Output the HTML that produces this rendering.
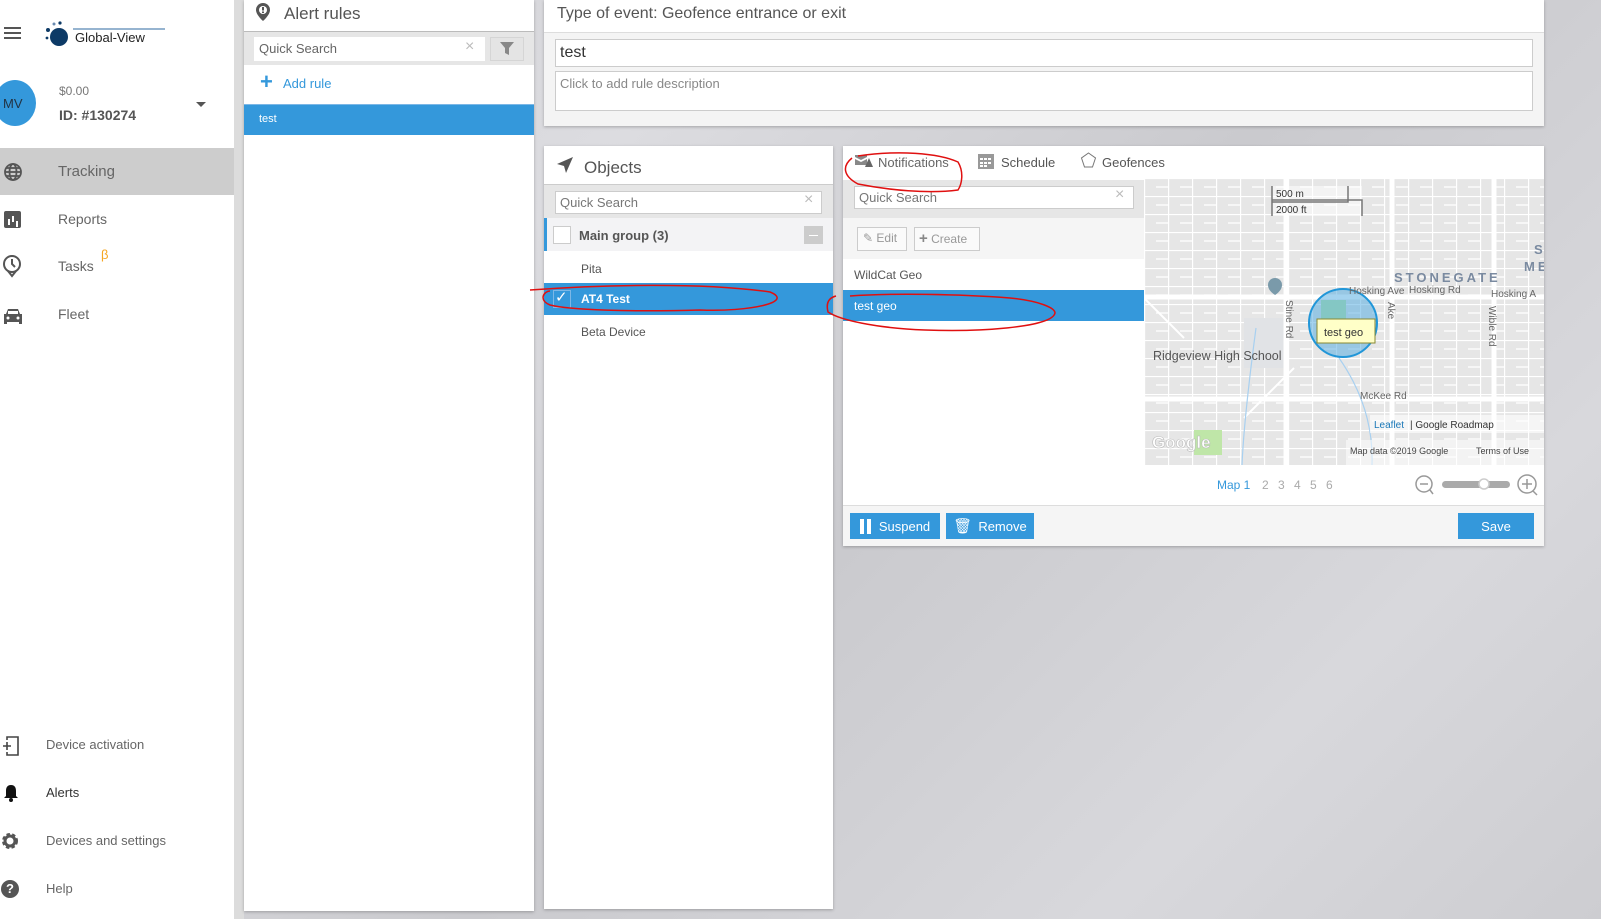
<!DOCTYPE html>
<html><head><meta charset="utf-8"><style>
*{box-sizing:border-box;margin:0;padding:0}
body{width:1601px;height:919px;overflow:hidden;position:relative;font-family:"Liberation Sans",sans-serif;color:#555;
background:#d3d3d7 linear-gradient(135deg,#cfcfd3 0%,#dcdce0 30%,#cacace 55%,#d8d8dc 80%,#cdcdd1 100%)}
.abs{position:absolute}
.panel{position:absolute;background:#fff;box-shadow:0 1px 3px rgba(0,0,0,.25)}
.t{position:absolute;white-space:nowrap}
.nav{font-size:14px;color:#666}
.btn{position:absolute;background:#3498db;color:#fff;font-size:13px;display:flex;align-items:center;justify-content:center;gap:6px}
</style></head><body>
<!-- sidebar -->
<div class="abs" style="left:0;top:0;width:234px;height:919px;background:#fff"></div>
<div class="abs" style="left:234px;top:0;width:10px;height:919px;background:#dcdcdc"></div>
<div class="abs" style="left:4px;top:27px;width:17px;height:2px;background:#555;box-shadow:0 5px 0 #555,0 10px 0 #555"></div>
<svg class="abs" style="left:44px;top:20px" width="125" height="28"><circle cx="15" cy="17" r="9" fill="#0d3a66"/><circle cx="4" cy="10" r="2" fill="#0d3a66"/><circle cx="10" cy="4" r="1.5" fill="#6a8ab0"/><circle cx="16" cy="3" r="1.6" fill="#0d3a66"/><circle cx="3" cy="18" r="1.4" fill="#0d3a66"/><line x1="29" y1="9" x2="121" y2="9" stroke="#2c6aa0" stroke-width="1"/><text x="31" y="22" font-size="13" fill="#222" font-family="Liberation Sans">Global-View</text></svg>
<div class="abs" style="left:-6px;top:80px;width:42px;height:46px;border-radius:50%;background:#3498db"></div>
<div class="t" style="left:3px;top:96px;font-size:13px;color:#234">MV</div>
<div class="t" style="left:59px;top:84px;font-size:12px;color:#777">$0.00</div>
<div class="t" style="left:59px;top:107px;font-size:14px;color:#555;font-weight:bold">ID: #130274</div>
<div class="abs" style="left:196px;top:102px;border:5px solid transparent;border-top:5px solid #555"></div>
<div class="abs" style="left:0;top:148px;width:234px;height:47px;background:#cdcdcd"></div>
<svg class="abs" style="left:3px;top:162px" width="20" height="20" fill="none" stroke="#555" stroke-width="1.8"><circle cx="10" cy="10" r="8"/><ellipse cx="10" cy="10" rx="3.5" ry="8"/><line x1="2" y1="10" x2="18" y2="10"/><line x1="3" y1="6" x2="17" y2="6"/><line x1="3" y1="14" x2="17" y2="14"/></svg>
<div class="t nav" style="left:58px;top:163px;font-size:15px">Tracking</div>
<div class="abs" style="left:4px;top:211px;width:17px;height:17px;background:#555;border-radius:2px"></div>
<div class="abs" style="left:8px;top:219px;width:2px;height:6px;background:#fff;box-shadow:4px -3px 0 #fff,8px 2px 0 #fff"></div>
<div class="t nav" style="left:58px;top:211px">Reports</div>
<svg class="abs" style="left:2px;top:254px" width="20" height="24" fill="none" stroke="#555" stroke-width="2"><circle cx="10" cy="10" r="8"/><path d="M10 5v5l3 3M6 17l4 5 4-5"/></svg>
<div class="t nav" style="left:58px;top:258px">Tasks</div>
<div class="t" style="left:101px;top:247px;font-size:13px;color:#f5a623">β</div>
<svg class="abs" style="left:3px;top:308px" width="20" height="18" fill="#555"><path d="M3 6l2-5h10l2 5h2v10h-3v-2H4v2H1V6z"/><rect x="5" y="3" width="10" height="3" fill="#fff"/><circle cx="5" cy="10" r="1.5" fill="#fff"/><circle cx="15" cy="10" r="1.5" fill="#fff"/></svg>
<div class="t nav" style="left:58px;top:306px">Fleet</div>
<svg class="abs" style="left:2px;top:736px" width="18" height="20" fill="none" stroke="#444" stroke-width="1.6"><path d="M5 4V1h11v18H5v-3M1 10h8M5 6v8"/></svg>
<div class="t nav" style="left:46px;top:737px;font-size:13px">Device activation</div>
<svg class="abs" style="left:3px;top:784px" width="16" height="18" fill="#111"><path d="M8 1c-4 0-5 3-5 6v5l-2 2h14l-2-2V7c0-3-1-6-5-6z"/><circle cx="8" cy="16" r="2"/></svg>
<div class="t nav" style="left:46px;top:785px;font-size:13px;color:#333">Alerts</div>
<svg class="abs" style="left:1px;top:832px" width="18" height="18"><circle cx="9" cy="9" r="6" fill="none" stroke="#555" stroke-width="4" stroke-dasharray="3 2"/><circle cx="9" cy="9" r="5" fill="none" stroke="#555" stroke-width="3"/></svg>
<div class="t nav" style="left:46px;top:833px;font-size:13px">Devices and settings</div>
<div class="abs" style="left:1px;top:880px;width:18px;height:18px;border-radius:50%;background:#555;color:#fff;font-size:13px;font-weight:bold;text-align:center;line-height:18px">?</div>
<div class="t nav" style="left:46px;top:881px;font-size:13px">Help</div>

<!-- alert rules panel -->
<div class="panel" style="left:244px;top:0;width:290px;height:911px"></div>
<svg class="abs" style="left:256px;top:3px" width="14" height="18" fill="#555"><path d="M7 0a7 7 0 0 1 7 7c0 5-7 11-7 11S0 12 0 7a7 7 0 0 1 7-7z"/><circle cx="7" cy="7" r="4" fill="#fff"/><rect x="6" y="4" width="2" height="3.5"/><rect x="6" y="8.5" width="2" height="1.5"/></svg>
<div class="t" style="left:284px;top:4px;font-size:17px;color:#555">Alert rules</div>
<div class="abs" style="left:244px;top:31px;width:290px;height:34px;background:#e6e6e6;border-top:1px solid #bbb"></div>
<div class="abs" style="left:254px;top:37px;width:231px;height:24px;background:#fff"></div>
<div class="t" style="left:259px;top:41px;font-size:13px;color:#666">Quick Search</div>
<div class="t" style="left:465px;top:38px;font-size:16px;color:#bbb">×</div>
<div class="abs" style="left:490px;top:37px;width:34px;height:24px;border:1px solid #d5d5d5;background:#e4e4e4"></div>
<svg class="abs" style="left:500px;top:42px" width="14" height="14" fill="#888"><path d="M0 0h14L9 6v7L5 11V6z"/></svg>
<div class="t" style="left:260px;top:72px;font-size:22px;color:#3498db;font-weight:bold;line-height:20px">+</div>
<div class="t" style="left:283px;top:76px;font-size:13px;color:#3498db">Add rule</div>
<div class="abs" style="left:244px;top:104px;width:290px;height:31px;background:#3498db;border-top:1px solid #7cb7e6"></div>
<div class="t" style="left:259px;top:113px;font-size:11px;color:#fff">test</div>

<!-- top panel -->
<div class="panel" style="left:544px;top:0;width:1000px;height:126px;background:#f4f4f4"></div>
<div class="abs" style="left:544px;top:0;width:1000px;height:33px;background:#fff;border-bottom:1px solid #ddd"></div>
<div class="t" style="left:557px;top:5px;font-size:16px;color:#555">Type of event: Geofence entrance or exit</div>
<div class="abs" style="left:555px;top:39px;width:978px;height:28px;background:#fff;border:1px solid #ccc"></div>
<div class="t" style="left:560px;top:44px;font-size:16px;color:#333">test</div>
<div class="abs" style="left:555px;top:71px;width:978px;height:40px;background:#fff;border:1px solid #ccc"></div>
<div class="t" style="left:560px;top:76px;font-size:13px;color:#888">Click to add rule description</div>

<!-- objects panel -->
<div class="panel" style="left:544px;top:146px;width:289px;height:763px"></div>
<svg class="abs" style="left:556px;top:156px" width="18" height="18" fill="#555"><path d="M17 1L1 8l7 2 2 7z"/></svg>
<div class="t" style="left:584px;top:158px;font-size:17px;color:#555">Objects</div>
<div class="abs" style="left:544px;top:184px;width:289px;height:34px;background:#e6e6e6;border-top:1px solid #ccc"></div>
<div class="abs" style="left:555px;top:191px;width:267px;height:23px;background:#fff;border:1px solid #ccc"></div>
<div class="t" style="left:560px;top:195px;font-size:13px;color:#777">Quick Search</div>
<div class="t" style="left:804px;top:191px;font-size:16px;color:#bbb">×</div>
<div class="abs" style="left:544px;top:218px;width:289px;height:33px;background:#f3f3f5;border-left:3px solid #3498db"></div>
<div class="abs" style="left:553px;top:226px;width:18px;height:18px;background:#fff;border:1px solid #ccc"></div>
<div class="t" style="left:579px;top:228px;font-size:13px;color:#555;font-weight:bold">Main group (3)</div>
<div class="abs" style="left:804px;top:226px;width:19px;height:18px;background:#ccc"></div>
<div class="abs" style="left:809px;top:235px;width:9px;height:1px;background:#fff"></div>
<div class="t" style="left:581px;top:262px;font-size:12px;color:#555">Pita</div>
<div class="abs" style="left:544px;top:283px;width:289px;height:32px;background:#3498db"></div>
<div class="abs" style="left:553px;top:290px;width:18px;height:18px;border:1px solid #7cb7e6"></div>
<div class="t" style="left:555px;top:288px;font-size:15px;color:#fff">✓</div>
<div class="t" style="left:581px;top:292px;font-size:12px;color:#fff;font-weight:bold">AT4 Test</div>
<div class="t" style="left:581px;top:325px;font-size:12px;color:#555">Beta Device</div>

<!-- right panel -->
<div class="panel" style="left:843px;top:146px;width:701px;height:400px"></div>
<svg class="abs" style="left:855px;top:154px" width="18" height="14" fill="#888"><path d="M0 1h12v2L6 6 0 3z M0 5l6 3 6-3v6H0z"/><path d="M14 4l4 9h-8z" fill="#666"/></svg>
<div class="t" style="left:878px;top:155px;font-size:13px;color:#666">Notifications</div>
<svg class="abs" style="left:978px;top:154px" width="16" height="15"><rect width="16" height="15" fill="#999"/><g fill="#fff"><rect x="2" y="4" width="3" height="2"/><rect x="6" y="4" width="3" height="2"/><rect x="10" y="4" width="3" height="2"/><rect x="2" y="8" width="3" height="2"/><rect x="6" y="8" width="3" height="2"/><rect x="10" y="8" width="3" height="2"/><rect x="2" y="11" width="3" height="2"/><rect x="6" y="11" width="3" height="2"/></g></svg>
<div class="t" style="left:1001px;top:155px;font-size:13px;color:#555">Schedule</div>
<svg class="abs" style="left:1080px;top:152px" width="17" height="17" fill="none" stroke="#777"><path d="M8.5 1l7 5-3 9h-8l-3-9z"/></svg>
<div class="t" style="left:1102px;top:155px;font-size:13px;color:#555">Geofences</div>
<div class="abs" style="left:843px;top:180px;width:301px;height:38px;background:#e6e6e6"></div>
<div class="abs" style="left:854px;top:186px;width:280px;height:23px;background:#fff;border:1px solid #ccc"></div>
<div class="t" style="left:859px;top:190px;font-size:13px;color:#777">Quick Search</div>
<div class="t" style="left:1115px;top:186px;font-size:16px;color:#bbb">×</div>
<div class="abs" style="left:843px;top:218px;width:301px;height:41px;background:#f5f5f5"></div>
<div class="abs" style="left:857px;top:227px;width:50px;height:24px;border:1px solid #ccc;background:#fafafa"></div>
<div class="t" style="left:863px;top:231px;font-size:12px;color:#999">✎ Edit</div>
<div class="abs" style="left:914px;top:227px;width:66px;height:24px;border:1px solid #ccc;background:#fafafa"></div>
<div class="t" style="left:919px;top:230px;font-size:12px;color:#999"><b style="font-size:15px;color:#888">+</b> Create</div>
<div class="t" style="left:854px;top:268px;font-size:12px;color:#555">WildCat Geo</div>
<div class="abs" style="left:843px;top:290px;width:301px;height:31px;background:#3498db"></div>
<div class="t" style="left:854px;top:299px;font-size:12px;color:#fff">test geo</div>
<!-- map -->
<svg class="abs" style="left:1144px;top:178px" width="400" height="287" font-family="Liberation Sans">
<defs><pattern id="g" width="24" height="18" patternUnits="userSpaceOnUse"><path d="M0 0.5H24M0.5 0V18M12 9H24" stroke="#fff" stroke-width="1.3" fill="none"/></pattern></defs>
<rect width="400" height="287" fill="#e6e6e6"/>
<rect width="400" height="287" fill="url(#g)"/>
<rect x="100" y="140" width="40" height="50" fill="#e1e3e6"/>
<g stroke="#fff" stroke-width="5"><path d="M142 0V287M0 119H400M0 221H400M248 0V287M350 0V287"/></g>
<path d="M0 120L40 160M100 240L150 190" stroke="#fff" stroke-width="2"/>
<path d="M112 150Q100 240 98 287M195 180Q230 230 228 287" stroke="#a8d0f0" stroke-width="1.2" fill="none"/>
<rect x="177" y="122" width="25" height="33" fill="#bfe6a8"/><rect x="50" y="252" width="28" height="25" fill="#bfe6a8"/>
<circle cx="199" cy="145" r="34" fill="#4aa8e0" fill-opacity=".5" stroke="#2196d8" stroke-width="2"/>
<rect x="173" y="141" width="58" height="24" fill="#ffffc8" stroke="#888833"/>
<text x="180" y="158" font-size="11" fill="#333">test geo</text>
<path d="M124 107a7 7 0 0 1 14 0c0 6-7 10-7 10s-7-4-7-10z" fill="#7a9aaa"/>
<text x="9" y="182" font-size="12.5" fill="#555">Ridgeview High School</text>
<text x="205" y="116" font-size="10" fill="#666">Hosking Ave</text>
<text x="265" y="115" font-size="10" fill="#666">Hosking Rd</text>
<text x="347" y="119" font-size="10" fill="#666">Hosking A</text>
<text x="250" y="104" font-size="13" fill="#7a8aa0" font-weight="bold" letter-spacing="3">STONEGATE</text>
<text x="380" y="93" font-size="13" fill="#7a8aa0" font-weight="bold" letter-spacing="3">ME</text>
<text x="390" y="76" font-size="13" fill="#7a8aa0" font-weight="bold">S</text>
<text x="216" y="221" font-size="10" fill="#666">McKee Rd</text>
<text x="0" y="0" font-size="10" fill="#666" transform="translate(142 122) rotate(90)">Stine Rd</text>
<text x="0" y="0" font-size="10" fill="#666" transform="translate(345 128) rotate(90)">Wible Rd</text>
<text x="0" y="0" font-size="10" fill="#666" transform="translate(244 124) rotate(90)">Ake</text>
<rect x="128" y="8" width="90" height="30" fill="#fff" fill-opacity=".5"/>
<path d="M128 8v16h76V8M128 38V22h90v16" stroke="#777" stroke-width="1.5" fill="none"/>
<text x="132" y="19" font-size="10" fill="#333">500 m</text><text x="132" y="35" font-size="10" fill="#333">2000 ft</text>
<text x="8" y="270" font-size="17" fill="#fff" font-weight="bold" stroke="#bbb" stroke-width=".6">Google</text>
<rect x="226" y="237" width="174" height="18" fill="#fff" fill-opacity=".6"/>
<text x="230" y="250" font-size="10" fill="#1a78b8">Leaflet</text><text x="266" y="250" font-size="10" fill="#333">| Google Roadmap</text>
<rect x="202" y="262" width="198" height="25" fill="#fff" fill-opacity=".5"/>
<text x="206" y="276" font-size="9" fill="#444">Map data ©2019 Google</text><text x="332" y="276" font-size="9" fill="#444">Terms of Use</text>
</svg>
<div class="t" style="left:1217px;top:478px;font-size:12px;color:#3498db">Map 1</div>
<div class="t" style="left:1262px;top:478px;font-size:12px;color:#aaa;word-spacing:6px">2 3 4 5 6</div>
<svg class="abs" style="left:1414px;top:474px" width="128" height="22" fill="none" stroke="#999" stroke-width="1.5"><circle cx="10" cy="10" r="8"/><path d="M6 10h8M16 16l3 4"/><rect x="28" y="7" width="68" height="7" rx="3.5" fill="#aaa" stroke="none"/><circle cx="70" cy="10" r="5" fill="#fff" stroke="#ccc"/><circle cx="113" cy="10" r="9"/><path d="M108 10h10M113 5v10M119 17l4 4"/></svg>
<div class="abs" style="left:843px;top:505px;width:701px;height:41px;background:#f5f5f5;border-top:1px solid #ddd"></div>
<div class="btn" style="left:850px;top:513px;width:90px;height:26px"><span style="display:inline-block;width:4px;height:15px;background:#fff;box-shadow:7px 0 0 #fff;margin-right:9px"></span>Suspend</div>
<div class="btn" style="left:946px;top:513px;width:88px;height:26px"><span style="font-size:15px">🗑</span>Remove</div>
<div class="btn" style="left:1458px;top:513px;width:76px;height:26px">Save</div>

<!-- red annotations -->
<svg class="abs" style="left:0;top:0" width="1601" height="919" fill="none" stroke="#e01010" stroke-width="1.5">
<path d="M530 290C600 285 700 282 770 292c25 10-20 20-70 18-70 2-130 0-150-5-12-5-6-14 0-14"/>
<path d="M858 156c40-6 80-3 100 6 6 10 4 22 0 28-30 4-70 0-100-6-15-8-16-18-6-26"/>
<path d="M850 296c40-3 110-2 160 2 30 3 45 10 45 15-3 15-80 19-130 17-50-2-85-10-97-18-2-8 0-14 8-16"/>
</svg>
</body></html>
